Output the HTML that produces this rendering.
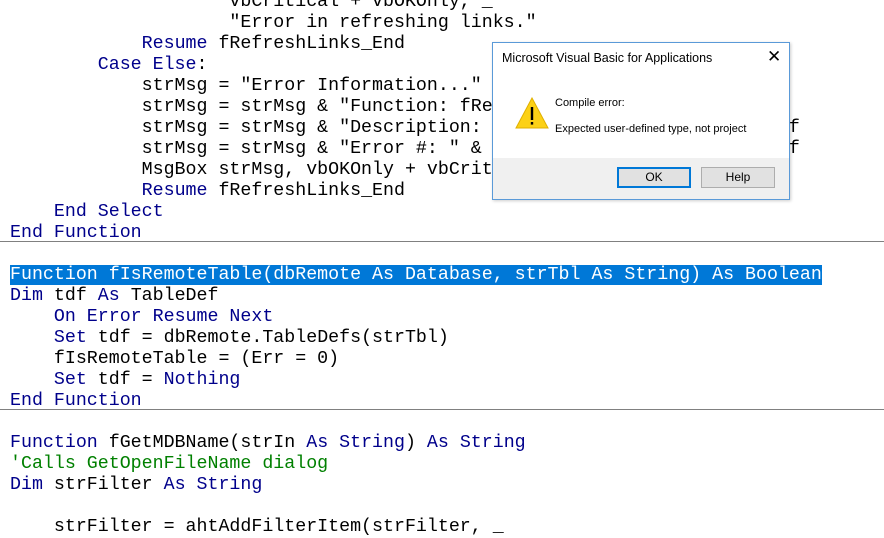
<!DOCTYPE html>
<html><head><meta charset="utf-8"><style>
body{margin:0;width:884px;height:527px;overflow:hidden;background:#fff;position:relative}
pre{margin:0;position:absolute;left:10px;font:18.3px/21px "Liberation Mono",monospace;color:#000;white-space:pre}
.k{color:#00008b}.c{color:#008000}
.hl{background:#0078d7;color:#fff}
.sep{position:absolute;left:0;width:884px;height:1px;background:#808080}
.dlg{position:absolute;left:492px;top:42px;width:296px;height:156px;border:1px solid #5a9ad8;background:#fff;font-family:"Liberation Sans",sans-serif;box-shadow:1px 1px 3px rgba(0,0,0,.2)}
.ft{position:absolute;left:0;right:0;top:115px;bottom:0;background:#f0f0f0}
.btn{position:absolute;top:124px;height:19px;font-size:12px;text-align:center;line-height:19px;background:#e1e1e1;border:1px solid #adadad;color:#000}
</style></head><body>
<pre style="top:-8px">                    vbCritical + vbOKOnly, _
                    "Error in refreshing links."
            <span class="k">Resume</span> fRefreshLinks_End
        <span class="k">Case Else</span>:
            strMsg = "Error Information..." &amp; vbCrLf &amp; vbCrLf
            strMsg = strMsg &amp; "Function: fRefreshLinks" &amp; vbCrLf
            strMsg = strMsg &amp; "Description: " &amp; Err.Description &amp; vbCrLf
            strMsg = strMsg &amp; "Error #: " &amp; Err.Number &amp; vbCrLf &amp; vbCrLf
            MsgBox strMsg, vbOKOnly + vbCritical, "Error"
            <span class="k">Resume</span> fRefreshLinks_End
    <span class="k">End Select</span>
<span class="k">End Function</span>

<span class="hl">Function fIsRemoteTable(dbRemote As Database, strTbl As String) As Boolean</span>
<span class="k">Dim</span> tdf <span class="k">As</span> TableDef
    <span class="k">On Error Resume Next</span>
    <span class="k">Set</span> tdf = dbRemote.TableDefs(strTbl)
    fIsRemoteTable = (Err = 0)
    <span class="k">Set</span> tdf = <span class="k">Nothing</span>
<span class="k">End Function</span>

<span class="k">Function</span> fGetMDBName(strIn <span class="k">As String</span>) <span class="k">As String</span>
<span class="c">'Calls GetOpenFileName dialog</span>
<span class="k">Dim</span> strFilter <span class="k">As String</span>

    strFilter = ahtAddFilterItem(strFilter, _</pre>
<div class="sep" style="top:241px"></div>
<div class="sep" style="top:409px"></div>
<div class="dlg">
 <div style="position:absolute;left:9px;top:8px;font-size:12.5px">Microsoft Visual Basic for Applications</div>
 <div style="position:absolute;left:274px;top:4px;font-size:17px;font-weight:300">✕</div>
 <svg style="position:absolute;left:22px;top:54px" width="34" height="32" viewBox="0 0 34 32"><path d="M17 1 L33 31 L1 31 Z" fill="#fcd116" stroke="#e0b000" stroke-width="1"/><rect x="15.8" y="10" width="2.4" height="13" fill="#000"/><rect x="15.8" y="25" width="2.4" height="2.6" fill="#000"/></svg>
 <div style="position:absolute;left:62px;top:54px;font-size:11px">Compile error:</div>
 <div style="position:absolute;left:62px;top:80px;font-size:11px">Expected user-defined type, not project</div>
 <div class="ft"></div>
 <div class="btn" style="left:124px;width:70px;border:2px solid #0078d7;height:17px;line-height:17px">OK</div>
 <div class="btn" style="left:208px;width:72px">Help</div>
</div>
</body></html>
